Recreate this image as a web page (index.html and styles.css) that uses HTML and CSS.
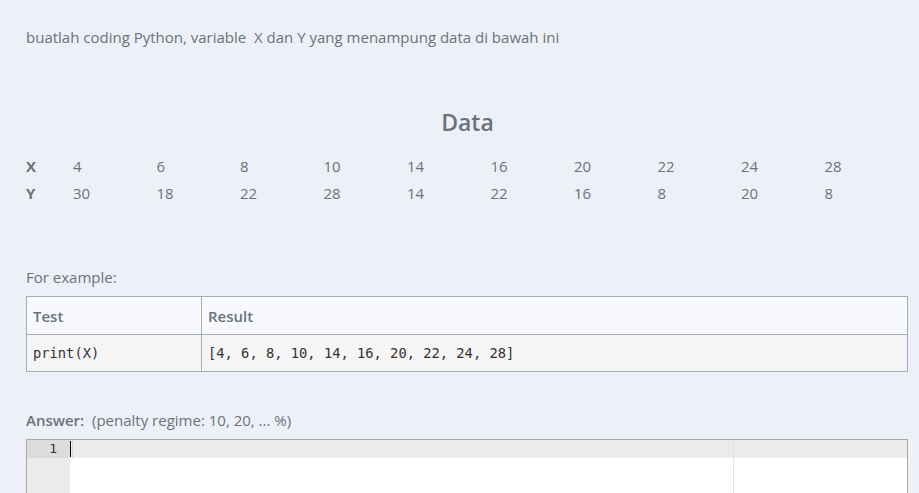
FILE: index.html
```html
<!DOCTYPE html>
<html lang="id">
<head>
<meta charset="utf-8">
<title>Question</title>
<link rel="stylesheet" href="styles.css">
</head>
<body>
<div class="page">
  <p class="prompt">buatlah coding Python, variable&nbsp; X dan Y yang menampung data di bawah ini</p>
  <h3 class="data-title">Data</h3>
  <div class="xy">
    <div class="lbl">X</div><div>4</div><div>6</div><div>8</div><div>10</div><div>14</div><div>16</div><div>20</div><div>22</div><div>24</div><div>28</div>
    <div class="lbl">Y</div><div>30</div><div>18</div><div>22</div><div>28</div><div>14</div><div>22</div><div>16</div><div>8</div><div>20</div><div>8</div>
  </div>
  <div class="example-label">For example:</div>
  <table class="examples">
    <thead>
      <tr><th class="c-test">Test</th><th>Result</th></tr>
    </thead>
    <tbody>
      <tr><td class="code">print(X)</td><td class="code">[4, 6, 8, 10, 14, 16, 20, 22, 24, 28]</td></tr>
    </tbody>
  </table>
  <div class="answer"><span class="answer-b">Answer:</span>&nbsp; (penalty regime: 10, 20, ... %)</div>
  <div class="editor">
    <div class="gutter">
      <div class="gutter-active">1</div>
    </div>
    <div class="content">
      <div class="active-line"><span class="cursor"></span></div>
      <div class="print-margin"></div>
    </div>
  </div>
</div>
</body>
</html>
```
FILE: styles.css
```css
html, body {
  margin: 0;
  padding: 0;
  background: #edf0f7;
}
body {
  font-family: "Open Sans", "Noto Sans", sans-serif;
  font-size: 15px;
  color: #6a737b;
  overflow: hidden;
}
.page {
  padding: 26px 11px 0 26px;
}
.prompt {
  margin: 0;
  line-height: 22px;
}
.data-title {
  margin: 58px 0 0 0;
  font-size: 23px;
  font-weight: 600;
  line-height: 32px;
  text-align: center;
  padding-left: 1px;
}
.xy {
  margin-top: 15px;
  display: grid;
  grid-template-columns: 47px repeat(10, 1fr);
  grid-auto-rows: 27px;
  align-items: center;
  line-height: 27px;
}
.xy .lbl {
  font-weight: 700;
}
.example-label {
  margin-top: 59px;
  line-height: 22px;
  font-weight: 500;
}
.examples {
  margin-top: 8px;
  width: 100%;
  border-collapse: collapse;
  border: 1px solid #a7adb4;
}
.examples th,
.examples td {
  border: 1px solid #a7adb4;
  text-align: left;
  padding: 0 6px;
  font-weight: 400;
}
.examples th {
  background: #f8f9fc;
  height: 37px;
  font-weight: 600;
  font-size: 15px;
}
.examples th.c-test {
  width: 162px;
}
.examples td {
  background: #f5f5f5;
  height: 36px;
}
.examples td.code {
  font-family: "DejaVu Sans Mono", "Liberation Mono", monospace;
  font-size: 13.75px;
  color: #333;
}
.answer {
  margin-top: 37px;
  line-height: 22px;
}
.answer-b {
  font-weight: 600;
}
.editor {
  margin-top: 8px;
  height: 130px;
  display: flex;
  border: 1px solid #a9a9a9;
  background: #ffffff;
}
.gutter {
  width: 43px;
  background: #ebebeb;
  flex: none;
}
.gutter-active {
  height: 18px;
  line-height: 18px;
  background: #dcdcdc;
  text-align: right;
  padding-right: 13px;
  font-family: "DejaVu Sans Mono", "Liberation Mono", monospace;
  font-size: 13px;
  color: #333;
}
.content {
  flex: 1;
  position: relative;
}
.active-line {
  height: 18px;
  background: #ebebeb;
  position: relative;
}
.cursor {
  position: absolute;
  left: 0;
  top: 1px;
  width: 1px;
  height: 16px;
  background: #000;
}
.active-line::after {
  content: "";
  position: absolute;
  left: 2px;
  top: 0;
  width: 1px;
  height: 18px;
  background: #d4d4d4;
}
.print-margin {
  position: absolute;
  top: 0;
  bottom: 0;
  left: 663px;
  width: 1px;
  background: #e3e3e3;
}
```
